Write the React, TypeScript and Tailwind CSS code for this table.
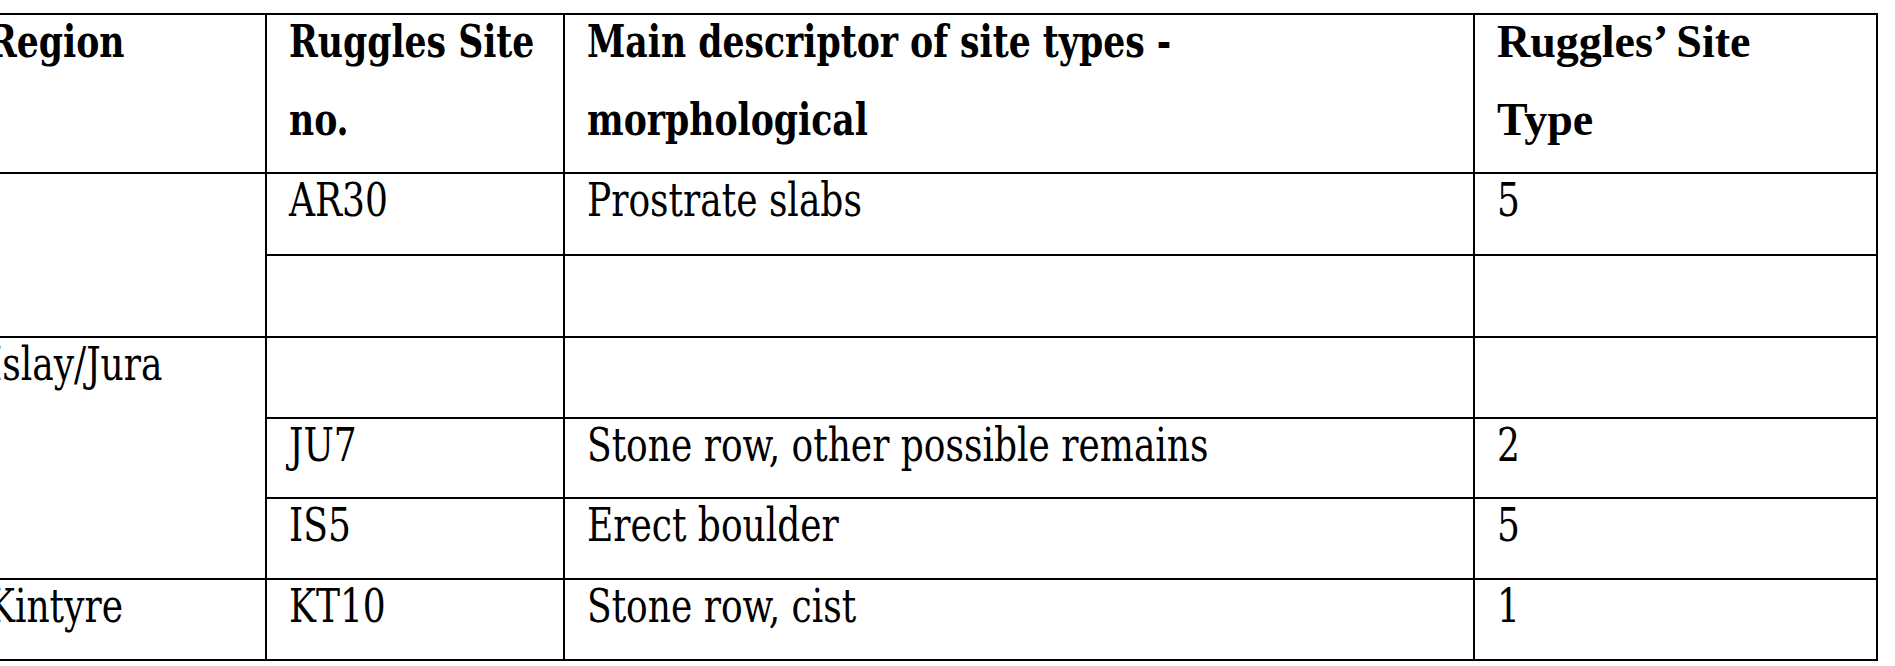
import React from "react";

const serif = "font-['DejaVu_Serif_Condensed','DejaVu_Serif',serif]";

// the condensed face is not installed, so narrow the regular one
function Narrow({ children, k = "body" }: { children: React.ReactNode; k?: "body" | "head" }) {
  return (
    <span
      className={
        "block whitespace-nowrap origin-left " + (k === "head" ? "scale-x-[0.875]" : "scale-x-[0.87]")
      }
    >
      {children}
    </span>
  );
}

function Head({ lines, times }: { lines: string[]; times?: boolean }) {
  return (
    <th
      className={
        "border-2 border-black align-top text-left font-bold px-[22px] " +
        (times ? "font-['Liberation_Serif','Times_New_Roman',serif] text-[46px]" : serif + " text-[44px]")
      }
    >
      <div className="leading-[78px] -mt-[12px]">
        {lines.map((l) =>
          times ? (
            <span key={l} className="block whitespace-nowrap">
              {l}
            </span>
          ) : (
            <Narrow key={l} k="head">
              {l}
            </Narrow>
          )
        )}
      </div>
    </th>
  );
}

function Cell({ children, rowSpan }: { children?: React.ReactNode; rowSpan?: number }) {
  return (
    <td rowSpan={rowSpan} className={"border-2 border-black align-top px-[22px] text-[46px] " + serif}>
      <div className="leading-[52px]">{children ? <Narrow>{children}</Narrow> : null}</div>
    </td>
  );
}

export default function App() {
  return (
    <div className="w-[1895px] h-[666px] bg-white overflow-hidden text-black">
      <table className="border-collapse table-fixed w-[1912px] -ml-[36px] mt-[13px]">
        <colgroup>
          <col className="w-[301px]" />
          <col className="w-[298px]" />
          <col className="w-[910px]" />
          <col className="w-[403px]" />
        </colgroup>
        <thead>
          <tr className="h-[159px]">
            <Head lines={["Region"]} />
            <Head lines={["Ruggles Site", "no."]} />
            <Head lines={["Main descriptor of site types -", "morphological"]} />
            <Head times lines={["Ruggles’ Site", "Type"]} />
          </tr>
        </thead>
        <tbody>
          <tr className="h-[82px]">
            <Cell rowSpan={2} />
            <Cell>AR30</Cell>
            <Cell>Prostrate slabs</Cell>
            <Cell>5</Cell>
          </tr>
          <tr className="h-[82px]">
            <Cell />
            <Cell />
            <Cell />
          </tr>
          <tr className="h-[81px]">
            <Cell rowSpan={3}>Islay/Jura</Cell>
            <Cell />
            <Cell />
            <Cell />
          </tr>
          <tr className="h-[80px]">
            <Cell>JU7</Cell>
            <Cell>Stone row, other possible remains</Cell>
            <Cell>2</Cell>
          </tr>
          <tr className="h-[81px]">
            <Cell>IS5</Cell>
            <Cell>Erect boulder</Cell>
            <Cell>5</Cell>
          </tr>
          <tr className="h-[81px]">
            <Cell>Kintyre</Cell>
            <Cell>KT10</Cell>
            <Cell>Stone row, cist</Cell>
            <Cell>1</Cell>
          </tr>
        </tbody>
      </table>
    </div>
  );
}
